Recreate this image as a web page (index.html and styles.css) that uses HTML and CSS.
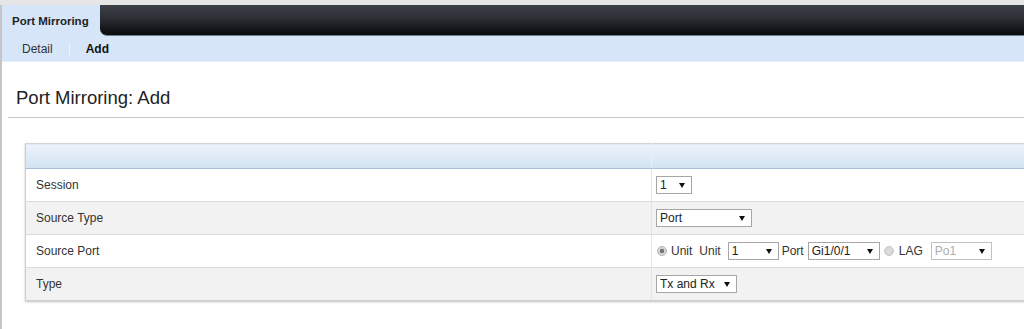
FILE: index.html
```html
<!DOCTYPE html>
<html lang="en">
<head>
  <meta charset="UTF-8">
  <title>Port Mirroring: Add</title>
  <link rel="stylesheet" href="styles.css">
</head>
<body>
  <div class="top-strip"></div>
  <div class="page">
    <!-- Horní lišta s kartou -->
    <div class="tabbar">
      <div class="tab">Port Mirroring</div>
      <div class="bar"></div>
    </div>
    <div class="subnav">
      <a class="subnav-link">Detail</a>
      <span class="sep"></span>
      <a class="subnav-link active">Add</a>
    </div>

    <div class="content">
      <h1>Port Mirroring: Add</h1>

      <table class="grid">
        <thead>
          <tr><th class="col-label"></th><th></th></tr>
        </thead>
        <tbody>
          <tr>
            <td class="col-label">Session</td>
            <td><span class="sel w-session"><select><option>1</option></select></span></td>
          </tr>
          <tr class="alt">
            <td class="col-label">Source Type</td>
            <td><span class="sel w-srctype"><select><option>Port</option></select></span></td>
          </tr>
          <tr>
            <td class="col-label">Source Port</td>
            <td>
              <div class="inline">
                <span class="radio checked"></span>
                <span class="lbl-first">Unit</span>
                <span class="lbl-unit">Unit</span>
                <span class="sel w-unit"><select><option>1</option></select></span>
                <span class="lbl-port">Port</span>
                <span class="sel w-port"><select><option>Gi1/0/1</option></select></span>
                <span class="radio off"></span>
                <span class="lbl-lag">LAG</span>
                <span class="sel w-lag disabled"><select disabled><option>Po1</option></select></span>
              </div>
            </td>
          </tr>
          <tr class="alt">
            <td class="col-label">Type</td>
            <td><span class="sel w-type"><select><option>Tx and Rx</option></select></span></td>
          </tr>
        </tbody>
      </table>
    </div>
  </div>
</body>
</html>
```

FILE: styles.css
```css
* {
  margin: 0;
  padding: 0;
  box-sizing: border-box;
}

body {
  font-family: "Liberation Sans", Arial, sans-serif;
  font-size: 12px;
  color: #333;
  background: #fff;
  overflow: hidden;
}

.top-strip {
  height: 5px;
  background: #e6e6e6;
}

.page {
  border-left: 2px solid #c6c6c6;
  min-height: 324px;
}

/* Karta + černá lišta */
.tabbar {
  display: flex;
  height: 31px;
  background: #d6e6f8;
}

.tab {
  width: 98px;
  padding: 10px 0 0 10px;
  font-size: 11.5px;
  font-weight: bold;
  color: #222;
}

.bar {
  flex: 1;
  border-bottom-left-radius: 7px;
  background: linear-gradient(#3d404a 0%, #2c2e35 45%, #15161a 80%, #0b0b0d 100%);
  border-bottom: 1px solid #6f7f90;
}

.subnav {
  display: flex;
  align-items: center;
  height: 26px;
  background: #d6e6f8;
  border-bottom: 1px solid #e6eef8;
  padding-left: 20px;
}

.subnav-link {
  color: #333;
}

.subnav-link.active {
  font-weight: bold;
  color: #111;
}

.sep {
  width: 1px;
  height: 12px;
  background: #eef4fb;
  margin: 0 16px 0 16px;
}

/* Obsah */
.content {
  padding-top: 24px;
}

h1 {
  font-size: 18.5px;
  font-weight: normal;
  line-height: 24px;
  color: #222;
  margin-left: 6px;
  padding: 0 0 7px 8px;
  border-bottom: 1px solid #c8c8c8;
}

.grid {
  margin: 25px 0 0 23px;
  width: 1020px;
  border-collapse: collapse;
  border-left: 1px solid #cfcfcf;
  border-top: 1px solid #d4d4d4;
  box-shadow: 0 1px 2px rgba(0, 0, 0, 0.25);
}

.grid th {
  height: 25px;
  background: linear-gradient(#ecf3fb, #d2e2f2);
  border-bottom: 1px solid #a9c0d6;
}

.grid th.col-label {
  border-right: 1px solid #e6eef7;
}

.grid td {
  height: 33px;
  padding: 0 0 0 4px;
  border-bottom: 1px solid #dcdcdc;
  vertical-align: middle;
}

.grid td.col-label {
  width: 626px;
  padding-left: 10px;
  border-right: 1px solid #e4e4e4;
}

.grid tr:last-child td {
  border-bottom: 1px solid #cfcfcf;
}

.grid tr.alt td {
  background: #f2f2f2;
}

/* Výběrové seznamy */
.sel {
  position: relative;
  display: inline-block;
  vertical-align: middle;
  height: 18px;
}

.sel select {
  -webkit-appearance: none;
  appearance: none;
  width: 100%;
  height: 18px;
  border: 1px solid #a6a6a6;
  border-radius: 0;
  background: #fff;
  font-family: "Liberation Sans", Arial, sans-serif;
  font-size: 12px;
  color: #222;
  padding: 0 0 0 3px;
  outline: none;
}

.sel::after {
  content: '';
  position: absolute;
  right: 7px;
  top: 7px;
  border-left: 3.5px solid transparent;
  border-right: 3.5px solid transparent;
  border-top: 5px solid #111;
}

.sel.disabled select {
  color: #8a8a8a;
  background: #fff;
}

.w-session { width: 36px; }
.w-srctype { width: 96px; }
.w-unit { width: 51px; }
.w-port { width: 72px; }
.w-lag { width: 61px; }
.w-type { width: 81px; }

/* Řádek se zdrojovým portem */
.inline {
  display: flex;
  align-items: center;
}

.radio {
  width: 10px;
  height: 10px;
  border-radius: 50%;
  margin-left: 1px;
  border: 1px solid #b4b4b4;
  background: radial-gradient(circle, #f4f4f4 0%, #d8d8d8 100%);
}

.radio.checked {
  background: radial-gradient(circle, #6b6b6b 0%, #7a7a7a 35%, #d0d0d0 45%, #e6e6e6 100%);
}

.radio.off {
  margin-left: 4px;
  border-color: #c8c8c8;
  background: radial-gradient(circle, #e0e0e0 0%, #d0d0d0 100%);
}

.lbl-first { margin-left: 4px; }
.lbl-unit { margin-left: 7px; }
.w-unit { margin-left: 7px; }
.lbl-port { margin-left: 3px; }
.w-port { margin-left: 4px; }
.lbl-lag { margin-left: 5px; }
.w-lag { margin-left: 8px; }
```
